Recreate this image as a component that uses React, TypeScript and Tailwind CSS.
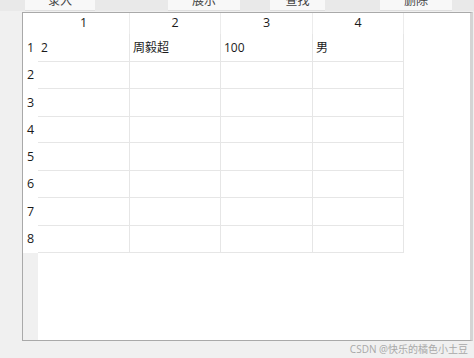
import React from "react";

const cols = [92, 91, 92, 91];
const rowHeights = [28, 27, 28, 26, 28, 27, 28, 27];
const data: string[][] = [["2", "周毅超", "100", "男"]];

const buttons = [
  { label: "录入", gap: 25, w: 70 },
  { label: "展示", gap: 73, w: 72 },
  { label: "查找", gap: 30, w: 55 },
  { label: "删除", gap: 55, w: 72 },
];

const font = {
  fontFamily: '"Open Sans", "Noto Sans CJK SC", sans-serif',
};

export default function App() {
  return (
    <div
      className="relative w-[474px] h-[358px] overflow-hidden bg-[#f0f0f0] text-[12px] text-[#1a1a1a]"
      style={font}
    >
      {/* button strip, mostly scrolled out of view */}
      <div className="flex h-[12px] overflow-hidden">
        {buttons.map((b) => (
          <React.Fragment key={b.label}>
            <div className="h-[11px] bg-[#e9e9e9]" style={{ width: b.gap }} />
            <div
              className="h-[11px] overflow-hidden bg-[#f8f8f8] border-b border-[#dedede] flex justify-center"
              style={{ width: b.w }}
            >
              <span className="block -mt-[7px] leading-[16px] text-[12px] text-[#444]">
                {b.label}
              </span>
            </div>
          </React.Fragment>
        ))}
        <div className="flex-1 h-[11px] bg-[#e9e9e9]" />
      </div>

      {/* table widget */}
      <div className="ml-[22px] w-[451px] h-[329px] border border-[#a9a9a9] border-r-[3px] border-r-[#d4d4d4] bg-white flex flex-col">
        {/* horizontal header */}
        <div className="flex h-[21px] shrink-0">
          <div className="w-[15px] shrink-0 bg-white" />
          {cols.map((w, i) => (
            <div
              key={i}
              className="shrink-0 flex items-center justify-center border-r border-[#ececec] text-[12.5px]"
              style={{ width: w }}
            >
              {i + 1}
            </div>
          ))}
        </div>

        {/* rows */}
        {rowHeights.map((h, r) => (
          <div key={r} className="flex shrink-0" style={{ height: h }}>
            <div className="w-[15px] shrink-0 flex items-center justify-center bg-white text-[12.5px]">
              {r + 1}
            </div>
            {cols.map((w, c) => (
              <div
                key={c}
                className="shrink-0 flex items-center pl-[3px] border-r border-b border-[#e6e6e6] text-[12px]"
                style={{ width: w }}
              >
                {data[r]?.[c] ?? ""}
              </div>
            ))}
          </div>
        ))}

        {/* empty viewport area */}
        <div className="flex flex-1">
          <div className="w-[15px] shrink-0 bg-[#f0f0f0]" />
          <div className="flex-1 bg-white" />
        </div>
      </div>

      <div className="absolute right-[6px] bottom-[3px] text-[10px] text-[#a8a8a8] leading-[12px]">
        CSDN @快乐的橘色小土豆
      </div>
    </div>
  );
}
